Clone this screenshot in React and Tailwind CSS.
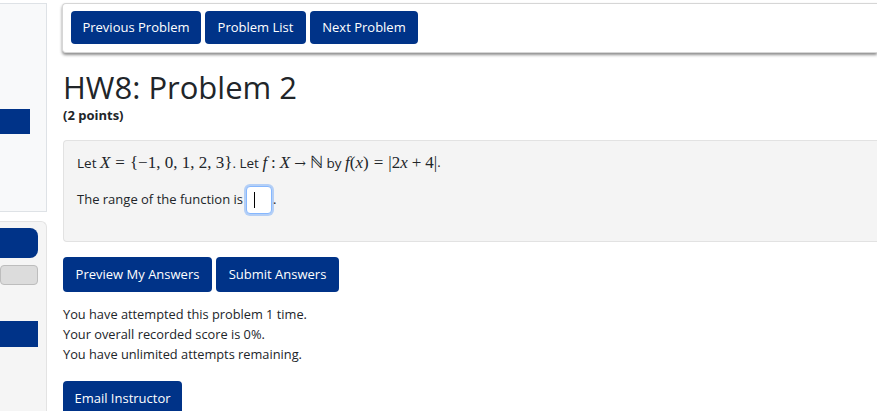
export default function App() {
    const blue = 'bg-[#003388]';
    const mathFont = "font-['Liberation_Serif',serif] text-[17px]";

    return (
        <div className="flex w-[877px] h-[411px] overflow-hidden bg-white font-['Open_Sans',sans-serif] text-[#212529]">

            {/* Sidebar (cut off at the left edge) */}
            <aside className="w-[47px] shrink-0 pt-[3px] flex flex-col">
                <div className="h-[209px] bg-[#f8f9fa] border-t border-r border-b border-[#dee2e6] pt-[105px]">
                    <div className={`w-[30px] h-[25px] ${blue}`} />
                </div>
                <div className="mt-[9px] flex-1 bg-[#f5f5f5] border-t border-r border-[#e3e3e3] rounded-tr-[6px] pt-[6px] pr-[8px]">
                    <div className={`h-[30px] ${blue} rounded-r-[8px]`} />
                    <div className="mt-[7px] h-[20px] bg-[#dcdcdc] border border-[#bdbdbd] rounded-[4px]" />
                    <div className={`mt-[36px] h-[26px] ${blue}`} />
                </div>
            </aside>

            <main className="ml-[16px] flex-1 pt-[3px]">

                {/* Problem navigation */}
                <nav className="-ml-px h-[50px] bg-white border border-r-0 border-[#d6d6d6] rounded-l-[4px] shadow-[0_2px_3px_rgba(0,0,0,0.45)] flex items-start gap-[4px] pl-[8px] pt-[7px]">
                    {[
                        { label: 'Previous Problem', w: 'w-[130px]' },
                        { label: 'Problem List', w: 'w-[101px]' },
                        { label: 'Next Problem', w: 'w-[108px]' },
                    ].map((b) => (
                        <button key={b.label} className={`${b.w} h-[33px] ${blue} text-white text-[13px] rounded-[4px] flex items-center justify-center`}>
                            {b.label}
                        </button>
                    ))}
                </nav>

                <h1 className="mt-[16px] text-[31px] leading-[36px] font-normal">HW8: Problem 2</h1>
                <p className="mt-[1px] text-[13px] leading-[18px] font-bold">(2 points)</p>

                {/* Problem text */}
                <div className="mt-[16px] h-[102px] bg-[#f4f4f4] border border-r-0 border-[#e2e2e2] rounded-l-[4px] pl-[13px] pt-[12px] text-[13px]">
                    <div className="h-[20px] flex items-center whitespace-nowrap">
                        <span className="text-[13.5px]">Let&nbsp;</span>
                        <span className={mathFont}>
                            <i>X</i><span className="mx-[5px]">=</span>{'{'}−1, 0, 1, 2, 3{'}'}
                        </span>
                        <span className="text-[13.5px]">. Let&nbsp;</span>
                        <span className={mathFont}>
                            <i>f</i><span className="mx-[4px]">:</span><i>X</i><span className="mx-[4px] font-['DejaVu_Serif',serif] text-[14px]">→</span>ℕ
                        </span>
                        <span className="text-[13.5px]">&nbsp;by&nbsp;</span>
                        <span className={mathFont}>
                            <i>f</i>(<i>x</i>)<span className="mx-[5px]">=</span>|2<i>x</i><span className="mx-[4px]">+</span>4|
                        </span>
                        <span>.</span>
                    </div>
                    <div className="mt-[13px] h-[28px] flex items-center whitespace-nowrap">
                        <span>The range of the function is</span>
                        <div className="ml-[3px] w-[26px] h-[28px] bg-white border border-[#86b7fe] rounded-[4px] shadow-[0_0_0_2px_rgba(13,110,253,0.28)] flex items-center pl-[7px]">
                            <div className="w-px h-[16px] bg-black" />
                        </div>
                        <span className="ml-[1px]">.</span>
                    </div>
                </div>

                {/* Submit buttons */}
                <div className="mt-[15px] flex gap-[4px]">
                    <button className={`w-[149px] h-[35px] ${blue} text-white text-[13px] rounded-[4px]`}>Preview My Answers</button>
                    <button className={`w-[123px] h-[35px] ${blue} text-white text-[13px] rounded-[4px]`}>Submit Answers</button>
                </div>

                <div className="mt-[12px] text-[12.8px] leading-[20px]">
                    <p>You have attempted this problem 1 time.</p>
                    <p>Your overall recorded score is 0%.</p>
                    <p>You have unlimited attempts remaining.</p>
                </div>

                <div className="mt-[17px]">
                    <button className={`w-[119px] h-[35px] ${blue} text-white text-[13px] rounded-[4px]`}>Email Instructor</button>
                </div>
            </main>
        </div>
    );
}
